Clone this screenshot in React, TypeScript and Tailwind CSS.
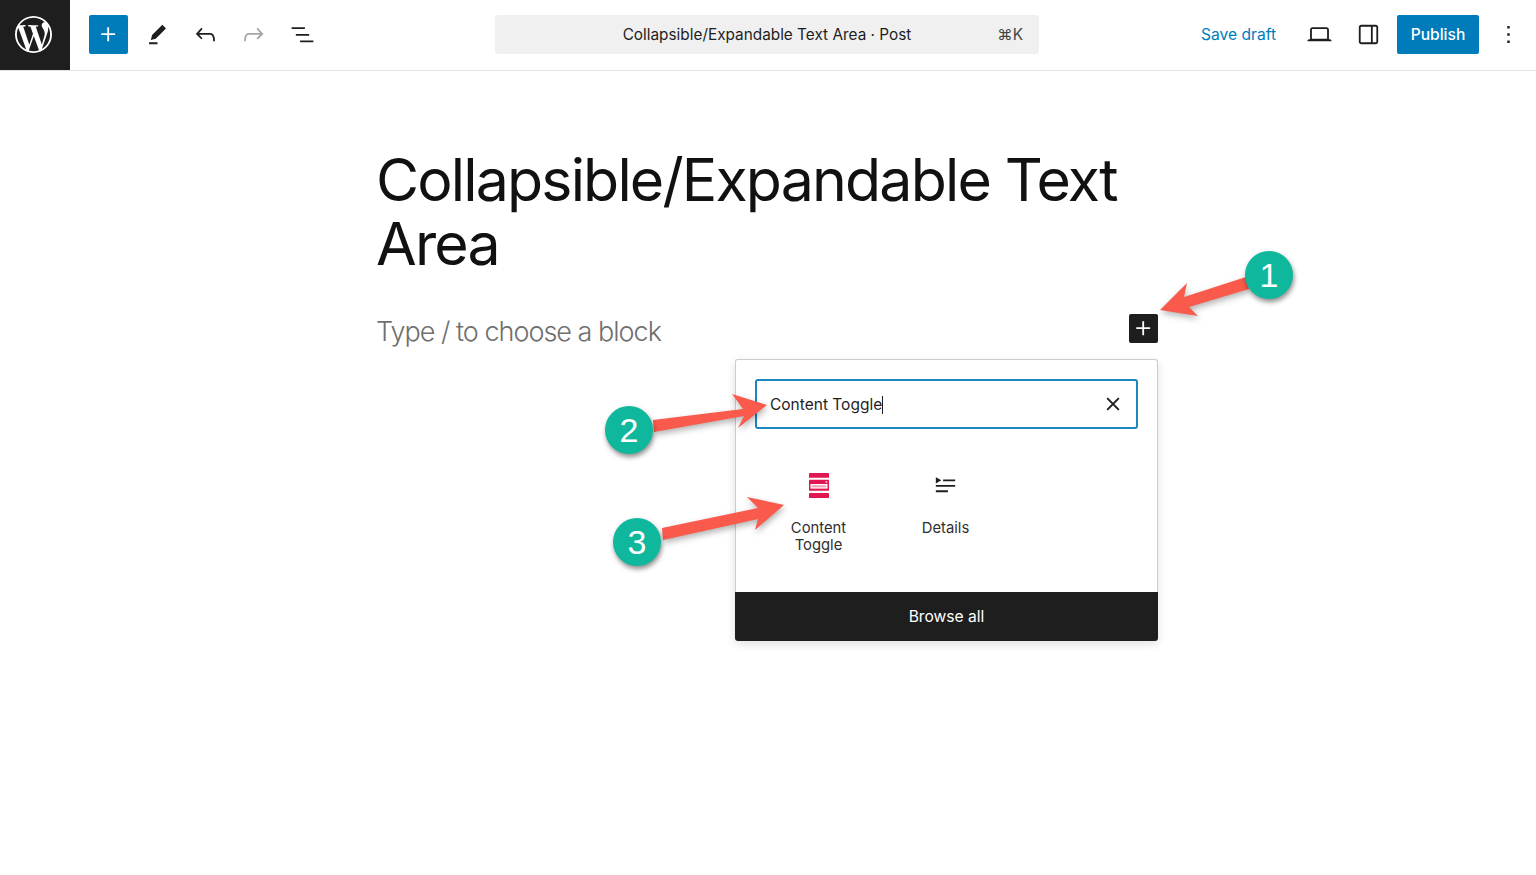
import type { ReactNode } from "react";
import { SiWordpress } from "react-icons/si";

const UI_FONT = "font-['Inter','Noto_Sans',sans-serif]";

function WpIcon({ d, className }: { d: string; className?: string }) {
  return (
    <svg viewBox="0 0 24 24" fill="currentColor" className={className ?? "w-[29px] h-[29px]"} aria-hidden="true">
      <path d={d} />
    </svg>
  );
}

const PLUS = "M11 12.5V17.5H12.5V12.5H17.5V11H12.5V6H11V11H6V12.5H11Z";
const PENCIL = "m19 7-3-3-8.5 8.5-1 4 4-1L19 7Zm-7 11.5H5V20h7v-1.5Z";
const UNDO = "M18.3 11.7c-.6-.6-1.4-.9-2.3-.9H6.7l2.9-3.3-1.1-1-4.5 5L8.5 16l1-1-2.7-2.7H16c.5 0 .9.2 1.3.5 1 1 1 3.4 1 4.5v.3h1.5v-.2c0-1.5 0-4.3-1.5-5.7z";
const REDO = "M15.6 6.5l-1.1 1 2.9 3.3H8c-.9 0-1.7.3-2.3.9-1.4 1.5-1.4 4.2-1.4 5.6v.2h1.5v-.3c0-1.1 0-3.5 1-4.5.3-.3.7-.5 1.3-.5h9.2L14.5 15l1.1 1.1 4.6-4.6-4.6-5z";
const LIST = "M3 6h11v1.5H3V6Zm3.5 5.5h11V13h-11v-1.5ZM21 17H10v1.5h11V17Z";
const LAPTOP = "M20.5 16h-.7V8c0-1.1-.9-2-2-2H6.2c-1.1 0-2 .9-2 2v8h-.7c-.8 0-1.5.7-1.5 1.5h20c0-.8-.7-1.5-1.5-1.5zM5.7 8c0-.3.2-.5.5-.5h11.6c.3 0 .5.2.5.5v7.6H5.7V8z";
const DRAWER = "M18 4H6c-1.1 0-2 .9-2 2v12c0 1.1.9 2 2 2h12c1.1 0 2-.9 2-2V6c0-1.1-.9-2-2-2zm-4 14.5H6c-.3 0-.5-.2-.5-.5V6c0-.3.2-.5.5-.5h8v13zm4.5-.5c0 .3-.2.5-.5.5h-2.5v-13H18c.3 0 .5.2.5.5v12z";
const DOTS = "M13 19h-2v-2h2v2zm0-6h-2v-2h2v2zm0-6h-2V5h2v2z";
const DETAILS = "M4 16h10v1.5H4V16Zm0-4.5h16V13H4v-1.5ZM10 7h10v1.5H10V7ZM4 5.25 8.5 7.75 4 10.25V5.25Z";

function CloseIcon() {
  return (
    <svg viewBox="0 0 24 24" fill="none" stroke="currentColor" strokeWidth="2.4" className="w-[20px] h-[20px] -mt-[2px]" aria-hidden="true">
      <path d="M5 5l14 14M19 5L5 19" />
    </svg>
  );
}

function ToggleIcon() {
  return (
    <svg viewBox="0 0 20 25" className="w-[20px] h-[25px] text-[#e2174f]" aria-hidden="true">
      <rect x="0" y="0" width="20" height="4.8" rx="0.4" fill="currentColor" />
      <rect x="0" y="6.8" width="20" height="11" rx="0.4" fill="currentColor" />
      <rect x="0" y="20" width="20" height="5" rx="0.4" fill="currentColor" />
      <rect x="1.5" y="11" width="17" height="4.6" fill="#fff" />
      <rect x="2.8" y="12.2" width="14.4" height="2.2" fill="#f3a6bb" />
      <rect x="16.5" y="8.4" width="1.8" height="1.2" fill="#fff" />
    </svg>
  );
}

function Toolbar() {
  return (
    <header className="flex items-center h-[71px] pb-[1px] border-b border-[#e2e2e2] bg-white">
      <div className="flex items-center w-[495px] h-full">
        <div className="flex items-center justify-center w-[70px] h-[70px] -mb-[1px] pr-[3px] pb-[1px] bg-[#1e1e1e] text-white">
          <SiWordpress className="w-[37px] h-[37px]" />
        </div>
        <button className="flex items-center justify-center ml-[19px] w-[39px] h-[39px] rounded-[2px] bg-[#007cba] text-white">
          <WpIcon d={PLUS} />
        </button>
        <div className="flex items-center ml-[15px] gap-[19px] text-[#1e1e1e]">
          <WpIcon d={PENCIL} />
          <WpIcon d={UNDO} />
          <WpIcon d={REDO} className="w-[29px] h-[29px] text-[#a6a6a6]" />
          <WpIcon d={LIST} className="ml-[1px] w-[29px] h-[29px]" />
        </div>
      </div>
      <div className="relative flex items-center justify-center w-[544px] h-[39px] pt-[1px] rounded-[3px] bg-[#f0f0f0] text-[15.35px] text-[#1e1e1e]">
        <span>Collapsible/Expandable Text Area · Post</span>
        <span className="absolute right-[16px] text-[#444]">⌘K</span>
      </div>
      <div className="flex items-center flex-1 h-full pl-[162px]">
        <span className="text-[15.6px] text-[#007cba]">Save draft</span>
        <WpIcon d={LAPTOP} className="ml-[29px] w-[29px] h-[29px] text-[#1e1e1e]" />
        <WpIcon d={DRAWER} className="ml-[20px] w-[29px] h-[29px] text-[#1e1e1e]" />
        <button className="flex items-center justify-center ml-[14px] w-[82px] h-[39px] rounded-[2px] bg-[#007cba] text-white text-[15.6px] font-medium">
          Publish
        </button>
        <WpIcon d={DOTS} className="ml-[15px] w-[29px] h-[29px] text-[#1e1e1e]" />
      </div>
    </header>
  );
}

function BlockItem({ icon, label }: { icon: ReactNode; label: string }) {
  return (
    <div className="flex flex-col items-center w-[127px] text-center">
      <div className="flex items-center justify-center h-[29px]">{icon}</div>
      <span className="mt-[20px] w-[70px] text-[14.8px] leading-[17px] text-[#2f2f2f]">{label}</span>
    </div>
  );
}

function Inserter() {
  return (
    <div className="absolute left-[735px] top-[359px] flex flex-col w-[423px] h-[282px] rounded-[3px] bg-white shadow-[0_3px_10px_rgba(0,0,0,0.12)]">
      <div className="flex flex-col flex-1 px-[19px] pt-[19px] rounded-t-[3px] border-x border-t border-[#cccccc]">
        <div className="flex items-center justify-between h-[50px] pl-[13px] pr-[13px] pt-[1px] rounded-[3px] border-2 border-[#1b86c0] text-[#1e1e1e]">
          <span className="flex items-center text-[15.5px]">
            Content Toggle
            <span className="w-px h-[18px] bg-[#1e1e1e]" />
          </span>
          <CloseIcon />
        </div>
        <div className="flex pt-[42px]">
          <BlockItem icon={<ToggleIcon />} label="Content Toggle" />
          <BlockItem icon={<WpIcon d={DETAILS} className="w-[29px] h-[29px] text-[#1e1e1e]" />} label="Details" />
        </div>
      </div>
      <div className="flex items-center justify-center h-[49px] pt-[1px] rounded-b-[3px] bg-[#1e1e1e] text-white text-[15.6px]">
        Browse all
      </div>
    </div>
  );
}

function Badge({ n, className }: { n: number; className: string }) {
  return (
    <div className={`absolute flex items-center justify-center w-[48px] h-[48px] rounded-full bg-[#0fb89c] text-white text-[34px] font-['Liberation_Sans',sans-serif] shadow-[1px_3px_5px_rgba(0,0,0,0.45)] ${className}`}>
      {n}
    </div>
  );
}

function Arrows() {
  return (
    <svg viewBox="0 0 1536 875" className="absolute inset-0 w-[1536px] h-[875px] pointer-events-none drop-shadow-[1px_3px_3px_rgba(0,0,0,0.3)]" aria-hidden="true">
      <polygon fill="#fa5a4c" points="1160,310 1187,283 1184,297 1246,277 1249,289 1189,307 1198,316" />
      <polygon fill="#fa5a4c" points="767,405 732,394 743,409 653,420 654,432 744,416 738,428" />
      <polygon fill="#fa5a4c" points="784,505 747,497 758,508 662,528 663,540 758,519 755,530" />
    </svg>
  );
}

export default function App() {
  return (
    <div className={`relative w-[1536px] h-[875px] overflow-hidden bg-white ${UI_FONT}`}>
      <Toolbar />
      <main className="pl-[376px] pt-[77px] w-[1157px]">
        <h1 className="text-[59px] leading-[64px] font-normal tracking-[-1.83px] text-[#111]">
          Collapsible/Expandable Text Area
        </h1>
        <p className="mt-[36px] text-[27px] leading-[40px] font-light tracking-[-1px] text-[#6f6f6f]">
          Type / to choose a block
        </p>
      </main>
      <button className="absolute left-[1129px] top-[314px] flex items-center justify-center w-[29px] h-[29px] rounded-[2px] bg-[#1e1e1e] text-white">
        <WpIcon d={PLUS} className="w-[29px] h-[29px]" />
      </button>
      <Inserter />
      <Arrows />
      <Badge n={1} className="left-[1245px] top-[251px]" />
      <Badge n={2} className="left-[605px] top-[406px]" />
      <Badge n={3} className="left-[613px] top-[518px]" />
    </div>
  );
}
